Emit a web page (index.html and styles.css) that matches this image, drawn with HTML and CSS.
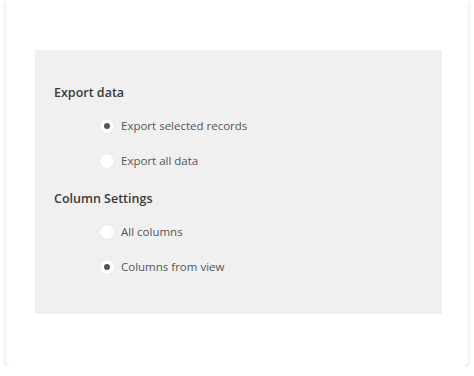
FILE: index.html
```html
<!DOCTYPE html>
<html lang="en">
<head>
  <meta charset="UTF-8">
  <meta name="viewport" content="width=device-width, initial-scale=1.0">
  <title>Export</title>
  <link rel="stylesheet" href="styles.css">
</head>
<body>
  <div class="card">
    <div class="panel">
      <div class="section">
        <h2>Export data</h2>
        <label class="option">
          <span class="radio checked"></span>
          <span class="option-label">Export selected records</span>
        </label>
        <label class="option">
          <span class="radio"></span>
          <span class="option-label">Export all data</span>
        </label>
      </div>

      <div class="section">
        <h2>Column Settings</h2>
        <label class="option">
          <span class="radio"></span>
          <span class="option-label">All columns</span>
        </label>
        <label class="option">
          <span class="radio checked"></span>
          <span class="option-label">Columns from view</span>
        </label>
      </div>
    </div>
  </div>
</body>
</html>
```

FILE: styles.css
```css
body {
  margin: 0;
  background-color: white;
  font-family: "Open Sans", Arial, sans-serif;
}

.card {
  margin: 0 6px;
  height: 366px;
  padding: 50px 26px 0 29px;
  box-sizing: border-box;
  background-color: white;
  border-radius: 0 0 5px 5px;
  box-shadow: 0 2px 4px rgba(0, 0, 0, 0.14);
}

.panel {
  height: 264px;
  padding: 33px 19px 0;
  box-sizing: border-box;
  background-color: #f0f0f0;
}

.section {
  margin-bottom: 11px;
}

.section h2 {
  margin: 0 0 5px;
  font-size: 12.5px;
  font-weight: 600;
  line-height: 20px;
  color: #3a3a3a;
}

.option {
  display: flex;
  align-items: center;
  height: 35px;
  padding-left: 46px;
  font-size: 11.5px;
  color: #555;
}

.radio {
  width: 14px;
  height: 14px;
  margin-right: 7px;
  border-radius: 50%;
  background-color: white;
  box-shadow: 0 0 1px rgba(0, 0, 0, 0.15);
  display: flex;
  align-items: center;
  justify-content: center;
}

.radio.checked::after {
  content: "";
  width: 6px;
  height: 6px;
  border-radius: 50%;
  background-color: #555;
}
```
